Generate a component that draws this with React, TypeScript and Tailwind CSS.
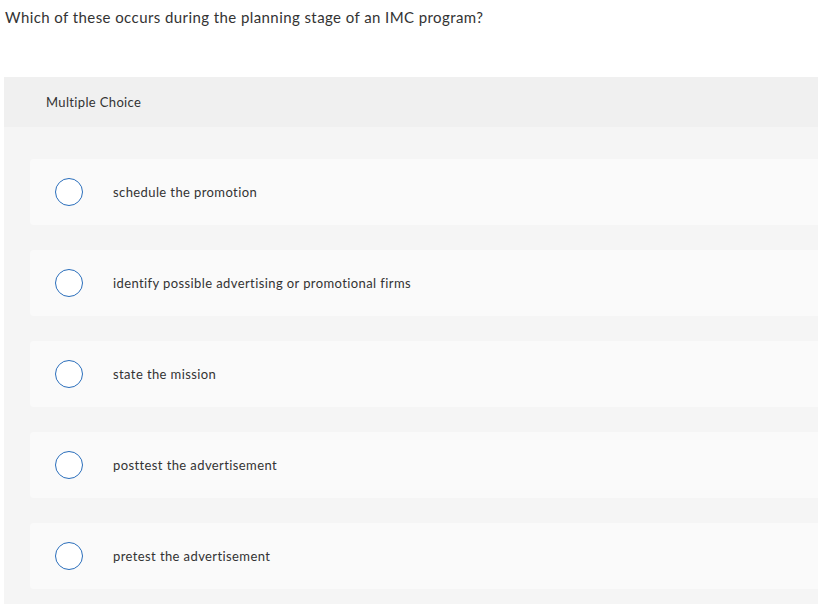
const options = [
  'schedule the promotion',
  'identify possible advertising or promotional firms',
  'state the mission',
  'posttest the advertisement',
  'pretest the advertisement',
];

export default function App() {
  return (
    <div
      className="w-[818px] h-[604px] overflow-hidden bg-white text-[#333]"
      style={{ fontFamily: 'Lato, "Open Sans", sans-serif' }}
    >
      {/* Question */}
      <p className="pl-[5px] pt-[7px] text-[15px] leading-[20px] tracking-[0.42px]">
        Which of these occurs during the planning stage of an IMC program?
      </p>

      {/* Answer panel */}
      <div className="ml-[4px] mt-[50px] w-[840px]">
        <div className="h-[50px] bg-[#f0f0f0] pl-[42px] flex items-center text-[13px] tracking-[0.35px] pt-[1px]">
          Multiple Choice
        </div>
        <div className="bg-[#f5f5f5] pt-[32px] pl-[26px] pb-[25px] flex flex-col gap-[25px]">
          {options.map((label) => (
            <div
              key={label}
              className="h-[66px] bg-[#fafafa] rounded-[4px] flex items-center pl-[25px]"
            >
              <span className="w-[28px] h-[28px] rounded-full border-[1.5px] border-[#2a6ebb] bg-white shrink-0" />
              <span className="ml-[30px] text-[13px] tracking-[0.4px] pt-[1px]">{label}</span>
            </div>
          ))}
        </div>
      </div>
    </div>
  );
}
